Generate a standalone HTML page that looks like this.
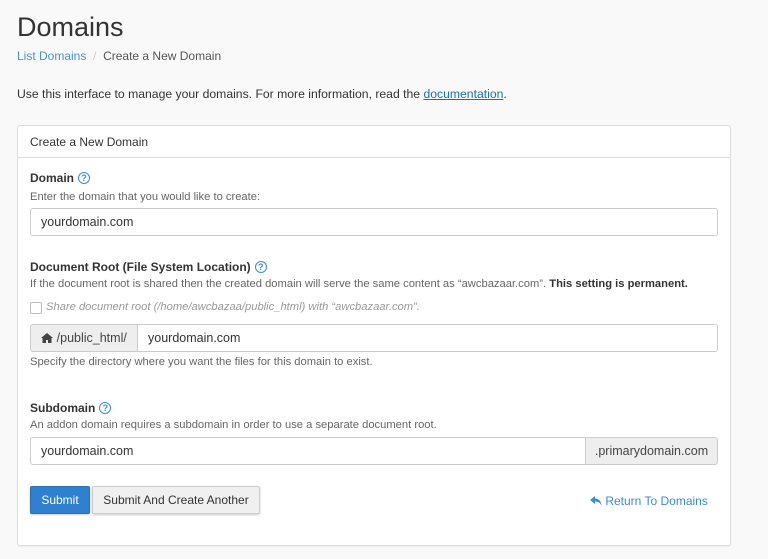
<!DOCTYPE html>
<html><head><style>
body{margin:0;background:#f9f9f9;font-family:"Liberation Sans",sans-serif;color:#333;width:768px;height:559px;overflow:hidden;position:relative}
.a{position:absolute;white-space:nowrap}
.lbl{font-weight:bold;font-size:12px;color:#333}
.hlp{font-size:11.2px;color:#666}
.q{display:inline-block;width:10px;height:10px;border:1px solid #3a8ad6;border-radius:50%;color:#3a8ad6;font-size:9px;line-height:10px;text-align:center;font-weight:bold;vertical-align:1px;margin-left:4px}
.inp{position:absolute;background:#fff;border:1px solid #ccc;border-radius:3px;box-sizing:border-box;font-size:12.5px;color:#333;line-height:27px;padding-left:10px}
.add{position:absolute;background:#eee;border:1px solid #ccc;box-sizing:border-box;font-size:12.5px;color:#444;line-height:27px;text-align:center}
</style></head><body>
<div class="a" style="left:17px;top:12px;font-size:27px;color:#333">Domains</div>
<div class="a" style="left:17px;top:49px;font-size:12px"><span style="color:#4a90d9">List Domains</span> <span style="color:#ccc">&nbsp;/&nbsp;</span> <span style="color:#555">Create a New Domain</span></div>
<div class="a" style="left:17px;top:87px;font-size:12.2px;color:#333">Use this interface to manage your domains. For more information, read the <span style="color:#1a6fb8;text-decoration:underline">documentation</span>.</div>
<div style="position:absolute;left:17px;top:125px;width:714px;height:421px;background:#fff;border:1px solid #ddd;border-radius:3px;box-sizing:border-box;box-shadow:0 1px 1px rgba(0,0,0,.05)"></div>
<div style="position:absolute;left:18px;top:157px;width:712px;height:1px;background:#ddd"></div>
<div class="a" style="left:30px;top:135px;font-size:12px;color:#333">Create a New Domain</div>
<div class="a lbl" style="left:30px;top:171px">Domain<span class="q">?</span></div>
<div class="a hlp" style="left:30px;top:191px">Enter the domain that you would like to create:</div>
<div class="inp" style="left:30px;top:208px;width:688px;height:28px">yourdomain.com</div>
<div class="a lbl" style="left:30px;top:260px">Document Root (File System Location)<span class="q">?</span></div>
<div class="a hlp" style="left:30px;top:278px">If the document root is shared then the created domain will serve the same content as “awcbazaar.com”. <b style="color:#333">This setting is permanent.</b></div>
<div style="position:absolute;left:30px;top:302px;width:10px;height:10px;border:1px solid #bbb;border-radius:2px;background:#fff"></div>
<div class="a hlp" style="left:46px;top:301px;font-style:italic;color:#999">Share document root (/home/awcbazaa/public_html) with “awcbazaar.com”.</div>
<div class="add" style="left:30px;top:324px;width:108px;height:28px;border-radius:3px 0 0 3px"><svg width="12" height="10" viewBox="0 0 12 10" style="vertical-align:-1px"><path d="M6 0L0 5h1.5v5h3.5V7h2v3h3.5V5H12z" fill="#444"/></svg> /public_html/</div>
<div class="inp" style="left:137px;top:324px;width:581px;height:28px;border-radius:0 3px 3px 0">yourdomain.com</div>
<div class="a hlp" style="left:30px;top:356px">Specify the directory where you want the files for this domain to exist.</div>
<div class="a lbl" style="left:30px;top:401px">Subdomain<span class="q">?</span></div>
<div class="a hlp" style="left:30px;top:419px">An addon domain requires a subdomain in order to use a separate document root.</div>
<div class="inp" style="left:30px;top:437px;width:556px;height:28px;border-radius:3px 0 0 3px">yourdomain.com</div>
<div class="add" style="left:585px;top:437px;width:133px;height:28px;border-radius:0 3px 3px 0">.primarydomain.com</div>
<div class="a" style="left:30px;top:486px;width:60px;height:28px;background:#2f80cf;border:1px solid #2a6fb5;box-sizing:border-box;color:#fff;font-size:12px;line-height:27px;text-align:center;border-radius:2px;box-shadow:0 1px 2px rgba(0,0,0,.2)">Submit</div>
<div class="a" style="left:92px;top:486px;width:168px;height:28px;background:#f0f0f0;border:1px solid #ccc;box-sizing:border-box;color:#333;font-size:12px;line-height:27px;text-align:center;border-radius:2px;box-shadow:0 1px 2px rgba(0,0,0,.2)">Submit And Create Another</div>
<div class="a" style="left:590px;top:494px;font-size:12px;color:#3a8ad6"><svg width="12" height="10" viewBox="0 0 12 10" style="vertical-align:-1px"><path d="M5 0L0 4l5 4V5.5c3 0 5 1 6.5 4C11 5 9 3 5 2.5z" fill="#3a8ad6"/></svg> Return To Domains</div>
</body></html>
